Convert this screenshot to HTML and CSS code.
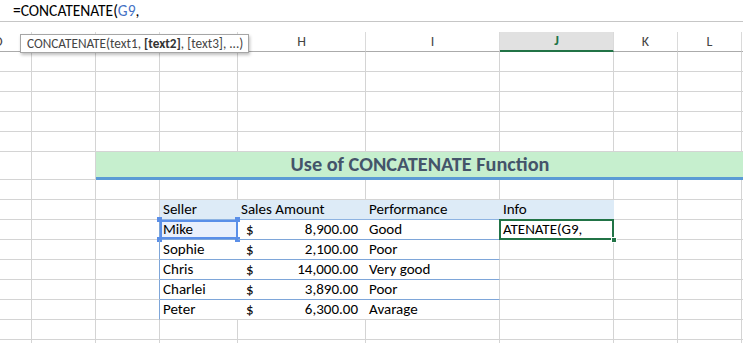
FILE: index.html
```html
<!DOCTYPE html>
<html>
<head>
<meta charset="utf-8">
<link rel="stylesheet" href="styles.css">
</head>
<body>
<div class="formula-bar"><span class="fx">=CONCATENATE(<span class="ref">G9</span>,</span></div>
<div class="spacer"></div>
<div class="sheet">
  <div class="ch ch-d"><span>D</span></div><div class="ch"></div><div class="ch"></div><div class="ch"></div><div class="ch">H</div><div class="ch">I</div><div class="ch ch-active">J</div><div class="ch">K</div><div class="ch">L</div><div class="ch"></div>

  <div class="c"></div><div class="c"></div><div class="c"></div><div class="c"></div><div class="c"></div><div class="c"></div><div class="c"></div><div class="c"></div><div class="c"></div><div class="c"></div>
  <div class="c"></div><div class="c"></div><div class="c"></div><div class="c"></div><div class="c"></div><div class="c"></div><div class="c"></div><div class="c"></div><div class="c"></div><div class="c"></div>
  <div class="c"></div><div class="c"></div><div class="c"></div><div class="c"></div><div class="c"></div><div class="c"></div><div class="c"></div><div class="c"></div><div class="c"></div><div class="c"></div>
  <div class="c"></div><div class="c"></div><div class="c"></div><div class="c"></div><div class="c"></div><div class="c"></div><div class="c"></div><div class="c"></div><div class="c"></div><div class="c"></div>
  <div class="c"></div><div class="c"></div><div class="c"></div><div class="c"></div><div class="c"></div><div class="c"></div><div class="c"></div><div class="c"></div><div class="c"></div><div class="c"></div>

  <div class="c"></div><div class="c"></div><div class="title">Use of CONCATENATE Function</div>

  <div class="c"></div><div class="c"></div><div class="c"></div><div class="c"></div><div class="c"></div><div class="c"></div><div class="c"></div><div class="c"></div><div class="c"></div><div class="c"></div>

  <div class="c"></div><div class="c"></div><div class="c"></div><div class="th">Seller</div><div class="th">Sales Amount</div><div class="th">Performance</div><div class="th">Info</div><div class="c"></div><div class="c"></div><div class="c"></div>

  <div class="c"></div><div class="c"></div><div class="c tl"></div><div class="td ref-cell">Mike<i class="h h-tl"></i><i class="h h-tr"></i><i class="h h-bl"></i><i class="h h-br"></i></div><div class="td amt"><span>$</span><span>8,900.00</span></div><div class="td last-col">Good</div><div class="c sel">ATENATE(G9,<i class="fill-handle"></i></div><div class="c"></div><div class="c"></div><div class="c"></div>

  <div class="c"></div><div class="c"></div><div class="c tl"></div><div class="td">Sophie</div><div class="td amt"><span>$</span><span>2,100.00</span></div><div class="td last-col">Poor</div><div class="c"></div><div class="c"></div><div class="c"></div><div class="c"></div>

  <div class="c"></div><div class="c"></div><div class="c tl"></div><div class="td">Chris</div><div class="td amt"><span>$</span><span>14,000.00</span></div><div class="td last-col">Very good</div><div class="c"></div><div class="c"></div><div class="c"></div><div class="c"></div>

  <div class="c"></div><div class="c"></div><div class="c tl"></div><div class="td">Charlei</div><div class="td amt"><span>$</span><span>3,890.00</span></div><div class="td last-col">Poor</div><div class="c"></div><div class="c"></div><div class="c"></div><div class="c"></div>

  <div class="c"></div><div class="c"></div><div class="c tl"></div><div class="td last-row">Peter</div><div class="td amt last-row"><span>$</span><span>6,300.00</span></div><div class="td last-col last-row">Avarage</div><div class="c"></div><div class="c"></div><div class="c"></div><div class="c"></div>

  <div class="c"></div><div class="c"></div><div class="c"></div><div class="c"></div><div class="c"></div><div class="c"></div><div class="c"></div><div class="c"></div><div class="c"></div><div class="c"></div>
  <div class="c"></div><div class="c"></div><div class="c"></div><div class="c"></div><div class="c"></div><div class="c"></div><div class="c"></div><div class="c"></div><div class="c"></div><div class="c"></div>
</div>
<div class="tooltip">CONCATENATE(text1, <b>[text2]</b>, [text3], ...)</div>
</body>
</html>
```

FILE: styles.css
```css
* { box-sizing: border-box; margin: 0; padding: 0; }
html, body { background: #fff; }
body {
  width: 743px;
  height: 343px;
  overflow: hidden;
  position: relative;
  font-family: Carlito, Lato, "Liberation Sans", sans-serif;
  font-size: 15px;
  color: #000;
}
.formula-bar {
  height: 22px;
  border-bottom: 1px solid #c6c6c6;
  padding-left: 13px;
  line-height: 21px;
  font-size: 15.5px;
  color: #000;
}
.formula-bar .ref { color: #4472c4; }
.spacer { height: 10px; }
.sheet {
  display: grid;
  grid-template-columns: 32px 64px 64px 78px 128px 134px 114px 64px 64px 1fr;
  grid-template-rows: 20px 20px 20px 20px 20px 20px 28px 20px 20px 20px 20px 20px 20px 20px 20px 20px;
}
.ch {
  border-right: 1px solid #dadada;
  border-bottom: 1px solid #ababab;
  text-align: center;
  color: #444;
  font-size: 14px;
  line-height: 19px;
  overflow: hidden;
  white-space: nowrap;
}
.ch-d { text-align: left; }
.ch-d span { display: inline-block; margin-left: -6px; }
.ch-active {
  background: #e1e1e1;
  color: #217346;
  font-weight: bold;
  border-bottom: 2px solid #217346;
  line-height: 18px;
}
.c {
  border-right: 1px solid #d4d4d4;
  border-bottom: 1px solid #d4d4d4;
  line-height: 19px;
  padding-left: 3px;
  white-space: nowrap;
  position: relative;
}
.tl { border-right-color: #7ea6d9; }
.title {
  grid-column: 3 / -1;
  background: #c6efce;
  border-bottom: 3px solid #5b9bd5;
  text-align: center;
  font-weight: bold;
  font-size: 20.3px;
  line-height: 25px;
  color: #44546a;
  padding-right: 2px;
}
.th {
  background: #ddebf7;
  border-bottom: 1px solid #8db3e2;
  padding-left: 3px;
  line-height: 19px;
  white-space: nowrap;
}
.td {
  border-bottom: 1px solid #7ea6d9;
  padding-left: 3px;
  line-height: 19px;
  white-space: nowrap;
  position: relative;
}
.td.last-col { border-right: 1px solid #d4d4d4; }
.td.last-row { border-bottom-color: #d4d4d4; }
.amt {
  display: flex;
  justify-content: space-between;
  padding-left: 8px;
  padding-right: 8px;
}
.ref-cell {
  background: #eaf0fc;
  box-shadow: inset 0 0 0 2px #5b8fe8;
}
.h {
  position: absolute;
  width: 5px;
  height: 5px;
  background: #5b8fe8;
}
.h-tl { left: -3px; top: -3px; }
.h-tr { right: -2px; top: -3px; }
.h-bl { left: -3px; bottom: -3px; }
.h-br { right: -2px; bottom: -3px; }
.sel::after {
  content: "";
  position: absolute;
  left: -1px;
  top: -1px;
  right: -1px;
  bottom: -1px;
  border: 2px solid #217346;
}
.fill-handle {
  position: absolute;
  right: -4px;
  bottom: -4px;
  width: 6px;
  height: 6px;
  background: #217346;
  border: 1px solid #fff;
  z-index: 2;
}
.tooltip {
  position: absolute;
  left: 20px;
  top: 34px;
  width: 229px;
  height: 19px;
  background: #fff;
  border: 1px solid #a6a6a6;
  box-shadow: 1px 2px 3px rgba(0, 0, 0, 0.25);
  color: #444;
  font-size: 13.25px;
  line-height: 17px;
  padding-left: 6px;
  white-space: nowrap;
}
.tooltip b { color: #333; }
```
